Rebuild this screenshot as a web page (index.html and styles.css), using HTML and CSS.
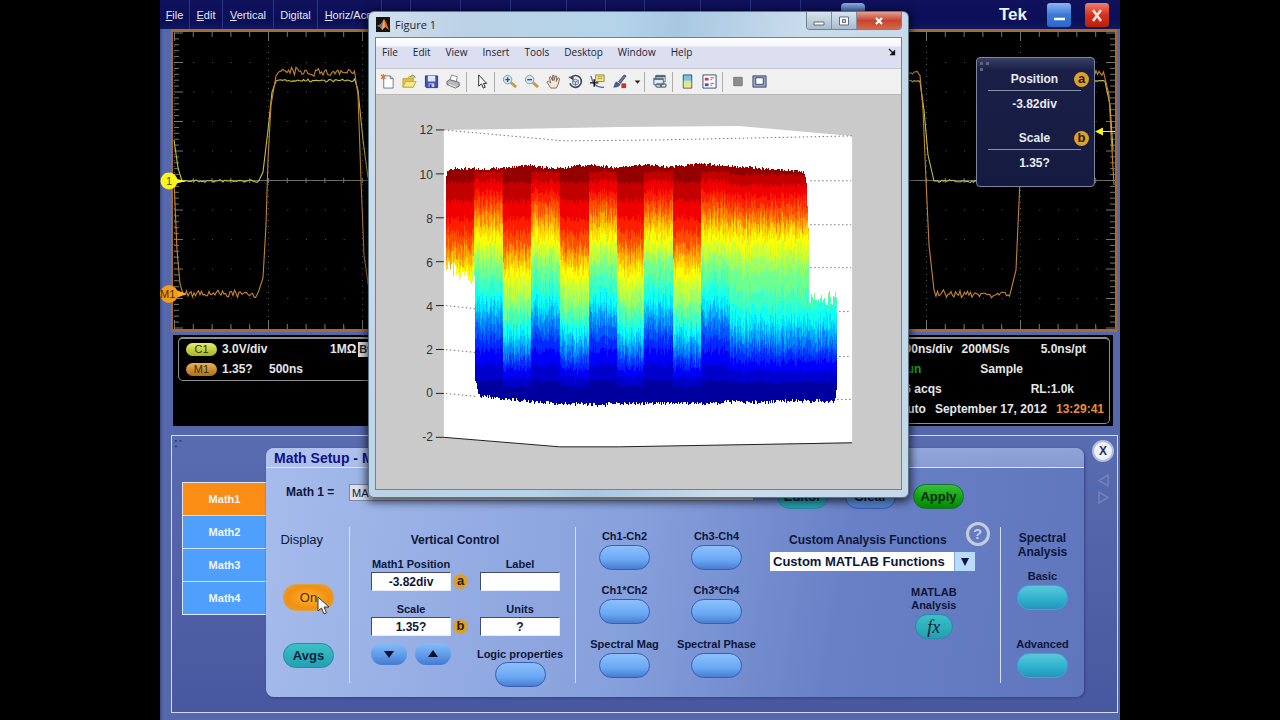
FILE: index.html
```html
<!DOCTYPE html>
<html lang="en">
<head>
<meta charset="utf-8">
<title>Oscilloscope - Math Setup</title>
<link rel="stylesheet" href="styles.css">
</head>
<body>
<main class="app">
  <header class="topbar">
    <nav class="menus" aria-label="Scope menu">
      <button class="menu"><u>F</u>ile</button>
      <button class="menu"><u>E</u>dit</button>
      <button class="menu menu-wide"><u>V</u>ertical</button>
      <button class="menu menu-mid">Di<u>g</u>ital</button>
      <button class="menu menu-last"><u>H</u>oriz/Acq</button>
      <span class="slot s29"></span><span class="slot s50"></span><span class="slot s50"></span><span class="slot s55"></span><span class="slot s40"></span><span class="slot s40"></span><span class="slot s55"></span><span class="slot s50"></span><span class="slot s50"></span>
    </nav>
    <span class="nub"></span>
    <strong class="brand">Tek</strong>
    <button class="sys sys-min" aria-label="Minimize"><svg viewBox="0 0 24 24"><path d="M7 16h11" stroke="#fff" stroke-width="2.500"/></svg></button>
    <button class="sys sys-close" aria-label="Close"><svg viewBox="0 0 24 24"><path d="M8 7l8 11M16 7l-8 11" stroke="#ffe4d8" stroke-width="2.600"/></svg></button>
  </header>

  <section class="scope">
    <svg class="trace" viewBox="173 32 942 297" id="trace">
      <g id="grid"></g>
      <path id="ch1" fill="none" stroke="#c4c23c" stroke-width="1.1"/>
      <path id="math" fill="none" stroke="#c58430" stroke-width="1.1"/>
      <path d="M174 178.500L187 181L174 184z" fill="#ff2"/>
      <circle cx="169" cy="181" r="8.500" fill="#fbf51c"/>
      <text x="166" y="185" font-size="11" fill="#554e00">1</text>
      <path d="M176 290L187 294L176 298z" fill="#ffae20"/>
      <circle cx="169" cy="294" r="9" fill="#f79a17"/>
      <text x="160" y="298" font-size="11" fill="#4d2c00">M1</text>
      <path d="M1095 131.500L1103 127.500V135.500zM1103 131h12v1h-12z" fill="#f5f02a"/>
    </svg>
    <aside class="knobs">
      <svg class="grip" viewBox="0 0 12 12"><path d="M1 1h3v3h-3zM7 1h3v3h-3zM1 7h3v3h-3z" fill="#5d6480"/></svg>
      <div class="knob"><span>Position</span><b class="badge">a</b></div>
      <div class="knob-value">-3.82div</div>
      <div class="knob"><span>Scale</span><b class="badge">b</b></div>
      <div class="knob-value">1.35?</div>
    </aside>
  </section>

  <section class="readout">
    <div class="box channels">
      <div class="line"><span class="pill pill-c1">C1</span><span class="v1">3.0V/div</span><span class="v2">1MΩ</span><span class="bw">B<small>W</small></span></div>
      <div class="line"><span class="pill pill-m1">M1</span><span class="v1">1.35?</span><span>500ns</span></div>
    </div>
    <div class="box timebase">
      <div class="line l1"><span>500ns/div</span><span>200MS/s</span><span class="far">5.0ns/pt</span></div>
      <div class="line l2"><span class="run">Run</span><span>Sample</span></div>
      <div class="line l3"><span>6 acqs</span><span>RL:1.0k</span></div>
      <div class="line l4"><span>Auto</span><span>September 17, 2012</span><span class="clock">13:29:41</span></div>
    </div>
  </section>

  <section class="dialog">
    <svg class="grip" viewBox="0 0 12 12"><path d="M1 1h2v2h-2zM6 1h2v2h-2zM1 7h2v2h-2z" fill="#2f3a72"/></svg>
    <nav class="tabs" aria-label="Math channel">
      <button class="tab tab-on">Math1</button>
      <button class="tab">Math2</button>
      <button class="tab">Math3</button>
      <button class="tab">Math4</button>
    </nav>
    <div class="panel">
      <h1 class="title">Math Setup - Math 1</h1>
      <div class="formula">
        <label for="expr">Math 1 =</label>
        <input id="expr" value="MATLAB">
        <button class="key teal">Editor</button>
        <button class="key blue">Clear</button>
        <button class="key green">Apply</button>
      </div>
      <div class="columns">
        <div class="col display">
          <h2>Display</h2>
          <button class="key orange">On</button>
          <button class="key teal">Avgs</button>
          <svg class="pointer" viewBox="0 0 13 19"><path d="M1 1V15L4.500 12L7 18L9.500 17L7 11H12z" fill="#fff" stroke="#333b55"/></svg>
        </div>
        <div class="col vertical">
          <h2>Vertical Control</h2>
          <div class="pairs">
            <div class="stack left">
              <div class="field"><label for="pos">Math1 Position</label><input id="pos" value="-3.82div"><b class="badge">a</b></div>
              <div class="field"><label for="scale">Scale</label><input id="scale" value="1.35?"><b class="badge">b</b></div>
              <div class="steps">
                <button class="step" aria-label="Down"><svg viewBox="0 0 10 8"><path d="M0 1h10L5 8z" fill="#0a1030"/></svg></button>
                <button class="step" aria-label="Up"><svg viewBox="0 0 10 8"><path d="M0 7h10L5 0z" fill="#0a1030"/></svg></button>
              </div>
            </div>
            <div class="stack">
              <div class="field"><label for="lab">Label</label><input id="lab" value=""></div>
              <div class="field"><label for="units">Units</label><input id="units" value="?"></div>
              <div class="op"><label for="logic">Logic properties</label><button id="logic" class="key blue"></button></div>
            </div>
          </div>
        </div>
        <div class="col ops">
          <div class="op"><label for="o1">Ch1-Ch2</label><button id="o1" class="key blue"></button></div>
          <div class="op"><label for="o2">Ch3-Ch4</label><button id="o2" class="key blue"></button></div>
          <div class="op"><label for="o3">Ch1*Ch2</label><button id="o3" class="key blue"></button></div>
          <div class="op"><label for="o4">Ch3*Ch4</label><button id="o4" class="key blue"></button></div>
          <div class="op"><label for="o5">Spectral Mag</label><button id="o5" class="key blue"></button></div>
          <div class="op"><label for="o6">Spectral Phase</label><button id="o6" class="key blue"></button></div>
        </div>
        <div class="col custom">
          <div class="custom-head"><label for="fn">Custom Analysis Functions</label><button class="help" aria-label="Help">?</button></div>
          <div class="select">
            <select id="fn"><option>Custom MATLAB Functions</option></select>
            <span class="arrow"><svg viewBox="0 0 8 8"><path d="M0 0h8L4 8z" fill="#101838"/></svg></span>
          </div>
          <div class="op matlab"><label for="fx">MATLAB<br>Analysis</label><button id="fx" class="key teal fx">fx</button></div>
        </div>
        <div class="col spectral">
          <h2>Spectral<br>Analysis</h2>
          <div class="op"><label for="basic">Basic</label><button id="basic" class="key teal plain"></button></div>
          <div class="op"><label for="adv">Advanced</label><button id="adv" class="key teal plain"></button></div>
        </div>
      </div>
    </div>
    <div class="side">
      <button class="dismiss" aria-label="Close panel">X</button>
      <svg class="nav" viewBox="0 0 12 32" fill="none" stroke="#7482bb" stroke-width="1.500"><path d="M11 2V13L2 7.500zM2 19V30L11 24.500z"/></svg>
    </div>
  </section>

  <section class="window" aria-label="Figure 1">
    <div class="win-title">
      <svg class="logo" viewBox="0 0 14 15"><path d="M0 0h14v15H0z" fill="#17110f"/><path d="M1 9L5 7L8 2L10 5L13 13L9 10L6 13L4 10z" fill="#e8632a"/><path d="M1 9L5 7L7 4L6 10L4 10z" fill="#4f7fa0"/><path d="M8 2L9 10L6 13L7 6z" fill="#f7b04a"/></svg>
      <span class="win-name">Figure 1</span>
      <div class="win-buttons">
        <button class="wb" aria-label="Minimize"><svg viewBox="0 0 12 12"><path d="M1 7h10v3H1z" fill="#fff" stroke="#5b6c7c"/></svg></button>
        <button class="wb" aria-label="Maximize"><svg viewBox="0 0 12 12"><path d="M1.500 2h9v8h-9z" fill="#fff" stroke="#5b6c7c"/><path d="M4.500 4.500h3v3h-3z" fill="#c8d4de" stroke="#5b6c7c"/></svg></button>
        <button class="wb wb-close" aria-label="Close"><svg viewBox="0 0 12 12"><path d="M3 3l6 6M9 3l-6 6" stroke="#fff" stroke-width="2.200"/></svg></button>
      </div>
    </div>
    <div class="win-body">
      <nav class="win-menu" aria-label="Figure menu">
        <button>File</button><button>Edit</button><button>View</button><button>Insert</button><button>Tools</button><button>Desktop</button><button>Window</button><button>Help</button>
        <svg class="dock" viewBox="0 0 8 8"><path d="M1 1L5 5M6.500 3V6.500H3z" stroke="#111" stroke-width="1.300" fill="#111"/></svg>
      </nav>
      <div class="tools">
        <button aria-label="New"><svg viewBox="0 0 16 16"><path d="M4 2h7l3 3v10H4z" fill="#fff" stroke="#69788c"/><path d="M11 2v3h3" fill="#c9d5e4" stroke="#69788c"/><path d="M1 1l5 4M6 1L1 5M3.500 0v6" stroke="#e0713a" stroke-width="1.300"/></svg></button>
        <button aria-label="Open"><svg viewBox="0 0 16 16"><path d="M1 5h5l1-2h5v3" fill="#f7de7a" stroke="#c9a436"/><path d="M1 14V5h11v9z" fill="#e7c249" stroke="#c9a436"/><path d="M1 14L4 8h11l-3 6z" fill="#fbe98e" stroke="#c9a436"/><path d="M9 3c2-3 4-2 5 1" fill="none" stroke="#5c7c49"/></svg></button>
        <button aria-label="Save"><svg viewBox="0 0 16 16"><path d="M1.500 2h13v12.500h-12l-1-1z" fill="#4652b8" stroke="#2b3483"/><path d="M4 2h8v6H4z" fill="#dfe5fa"/><path d="M5 10h6v4H5z" fill="#c7cbe4"/><path d="M6 11h2v3H6z" fill="#2b3483"/></svg></button>
        <button aria-label="Print"><svg viewBox="0 0 16 16"><path d="M4 7L6 1l6 2-1 5z" fill="#fff" stroke="#888"/><path d="M1 8l3-2 10 3v4l-4 2-9-4z" fill="#b6b9be" stroke="#63676e"/><path d="M3 11l8 3" stroke="#eee"/></svg></button>
        <span class="sep"></span>
        <button aria-label="Edit plot"><svg viewBox="0 0 16 16"><path d="M5 1v12l3-2.500L10 15l2-1-2-4h3.500z" fill="#fff" stroke="#222"/></svg></button>
        <span class="sep"></span>
        <button aria-label="Zoom in"><svg viewBox="0 0 16 16"><path d="M9.500 9L15 14" stroke="#c99a4c" stroke-width="3"/><circle cx="6" cy="6" r="4.500" fill="#d5e8f4" stroke="#8094a6"/><path d="M3.500 6h5M6 3.500v5" stroke="#265b72" stroke-width="1.500"/></svg></button>
        <button aria-label="Zoom out"><svg viewBox="0 0 16 16"><path d="M9.500 9L15 14" stroke="#c99a4c" stroke-width="3"/><circle cx="6" cy="6" r="4.500" fill="#d5e8f4" stroke="#8094a6"/><path d="M3.500 6h5" stroke="#265b72" stroke-width="1.500"/></svg></button>
        <button aria-label="Pan"><svg viewBox="0 0 16 16"><path d="M5 15L1 8.500l1.500-1L5 9.500L3.500 3.500l1.500-.5L7 7V1.500h1.500V7L10 2l1.500.5L11 8l2-4 1.500.8L13 11l-2 4z" fill="#f7e4d4" stroke="#6f5b50" stroke-width=".9"/></svg></button>
        <button aria-label="Rotate"><svg viewBox="0 0 16 16"><path d="M3 4a6.300 6.300 0 1 1-1 6" fill="none" stroke="#3d4760" stroke-width="1.700"/><path d="M0 3h6v4z" fill="#3d4760"/><path d="M5 7l3-1.500L11 7v3.500L8 12l-3-1.500zM5 7l3 1.500L11 7M8 8.500V12" fill="#d8def0" stroke="#4c5880" stroke-width=".8"/></svg></button>
        <button aria-label="Data cursor"><svg viewBox="0 0 16 16"><path d="M6 1h9v7H6z" fill="#f3e981" stroke="#8c8640"/><path d="M8 3h5M8 5h5" stroke="#a79f48"/><path d="M1 2c2 10 7 13 14 12" fill="none" stroke="#4c5db0" stroke-width="1.300"/><path d="M0 9.500h9M4.500 5.500v8" stroke="#111" stroke-width="1.500"/></svg></button>
        <button aria-label="Brush"><svg viewBox="0 0 16 16"><path d="M7 8L13 1l2 1-6 8z" fill="#6b7388" stroke="#4a5062"/><path d="M1 14c2-1 1-5 4-6l4 3c-1 3-5 4-8 3z" fill="#465d8c"/><path d="M10 10h5v5h-5z" fill="#d52b2b"/></svg></button>
        <button class="drop" aria-label="Brush colour"><svg viewBox="0 0 16 16"><path d="M5 7h6l-3 3.500z" fill="#222"/></svg></button>
        <span class="sep"></span>
        <button aria-label="Link"><svg viewBox="0 0 16 16"><path d="M4 1.500h10v7H4z" fill="#fff" stroke="#4b6279"/><path d="M4 2.500h10" stroke="#4b6279" stroke-width="2"/><path d="M2 4.500h10v7H2z" fill="#e2ebf2" stroke="#4b6279"/><path d="M2 5.500h10" stroke="#4b6279" stroke-width="1.500"/><rect x="4" y="10.500" width="6" height="3.500" rx="1.700" fill="none" stroke="#54697a" stroke-width="1.300"/><rect x="9" y="10.500" width="6" height="3.500" rx="1.700" fill="none" stroke="#54697a" stroke-width="1.300"/></svg></button>
        <span class="sep"></span>
        <button aria-label="Colorbar"><svg viewBox="0 0 16 16"><path d="M3.500 1h9v14h-9z" fill="#7cc3e8" stroke="#39466b"/><path d="M4 7h8v4H4z" fill="#c9e7a6"/><path d="M4 10h8v4.500H4z" fill="#f4e27c"/></svg></button>
        <button aria-label="Legend"><svg viewBox="0 0 16 16"><path d="M1 1h14v14H1z" fill="#fff" stroke="#39466b"/><path d="M3 4h4v3H3z" fill="#d8333c"/><path d="M3 10h4v3H3z" fill="#424fc0"/><path d="M9 4h4M9 6h2M9 10h4M9 12h2" stroke="#a55"/></svg></button>
        <span class="sep"></span>
        <button aria-label="Hide tools"><svg viewBox="0 0 16 16"><path d="M4 3.500h9v9H4z" fill="#8c8c8c" stroke="#777"/></svg></button>
        <button aria-label="Show tools"><svg viewBox="0 0 16 16"><path d="M1 2h14v12H1z" fill="#98a3cc" stroke="#39466b"/><path d="M4 4h8v7H4z" fill="#fff" stroke="#39466b"/></svg></button>
      </div>
      <svg class="plot" viewBox="376 95 526 395">
        <path d="M444 130L513 129L620 127L740 126L853 136V443L620 447.500H560L444 438z" fill="#fff"/>
        <g id="surface" shape-rendering="crispEdges"></g>
        <g fill="none" stroke="#777" stroke-dasharray="1.500 2.500"><path d="M444 130L565 141L660 140L853 136M446 306L475 309M446 350L476 353M446 394L476 397M811 181H852M811 225H852M811 268H852M840 312H852M840 357H852M838 400H852"/></g>
        <path d="M436 130h8M436 174h8M436 218h8M436 262h8M436 306h8M436 350h8M436 394h8M436 438h8L560 447.500H620L853 443.500" fill="none" stroke="#222"/>
        <g class="ticks" text-anchor="end"><text x="433" y="134">12</text><text x="433" y="179">10</text><text x="433" y="223">8</text><text x="433" y="267">6</text><text x="433" y="311">4</text><text x="433" y="355">2</text><text x="433" y="398">0</text><text x="433" y="442">-2</text></g>
      </svg>
    </div>
  </section>
</main>
<script src="plot.js"></script>
</body>
</html>
```
FILE: styles.css
```css
* { box-sizing: border-box; }
body { margin: 0; background: #000; font: bold 12px/14px "Liberation Sans", Arial, sans-serif; color: #0d1638; }
button, input, select { font: inherit; color: inherit; margin: 0; padding: 0; border: 0; }
button { cursor: pointer; }
h1, h2 { margin: 0; font: inherit; }
svg { display: block; }

.app { position: relative; width: 75%; min-width: 900px; min-height: 100vh; margin: 0 auto; display: flex; flex-direction: column; background: linear-gradient(90deg, #3c4a88 0, #5568ac 3px, #5568ac 100%); }

.topbar { display: flex; align-items: center; height: 29px; padding-right: 11px; background: linear-gradient(#10125c, #0a0f58 70%, #11185f); }
.menus { display: flex; align-self: stretch; flex: 1; overflow: hidden; }
.menu { width: 33px; flex: none; background: none; color: #e4e6f6; font-weight: normal; font-size: 11px; border-right: 1px solid #2c3584; text-align: center; }
.menu:first-child { width: 30px; }
.menu-mid { width: 44px; }
.menu-wide { width: 51px; }
.menu-last { width: 64px; padding-right: 2px; }
.slot { flex: none; border-right: 1px solid #2c3584; }
.s29 { width: 29px; } .s40 { width: 39px; } .s50 { width: 50px; } .s55 { width: 56px; }
.nub { width: 24px; height: 10px; margin: 3px 134px 0 0; align-self: flex-start; border-radius: 4px; background: linear-gradient(#8cace0, #4668b0); }
.brand { font-size: 17px; line-height: 24px; color: #eef0fa; margin-right: 20px; }
.sys { width: 24px; height: 24px; border-radius: 3px; }
.sys-min { background: linear-gradient(#8cb8f0, #3a78d8 50%, #2a68cc); margin-right: 14px; }
.sys-close { background: linear-gradient(#f08070, #d8301c 50%, #b82010); }

.scope { position: relative; margin: 0 3px 0 11px; border: solid #a46c34; border-width: 3px 2px; background: #000; }
.trace { width: 100%; overflow: visible; font-weight: normal; }
.knobs { position: absolute; top: 25px; right: 20px; width: 119px; height: 130px; padding: 14px 13px 0 11px; border: 1px solid #7f86a0; border-radius: 4px; background: linear-gradient(#3a3f66 0, #1a1f48 12px, #151b40); color: #e8eaf4; text-align: center; }
.knobs .grip { position: absolute; top: 3px; left: 2px; width: 12px; }
.knob { position: relative; height: 19px; border-bottom: 1px solid #8a90a8; }
.knob .badge { position: absolute; right: -8px; top: 0; }
.knob-value { line-height: 16px; padding: 5px 0 19px; }
.badge { width: 15px; height: 15px; border-radius: 8px; background: #dba02c; color: #2c1c00; text-align: center; line-height: 14px; font-size: 13px; }

.readout { display: flex; margin: 3px 7px 0 13px; height: 91px; background: #000; padding: 2px 3px 2px 5px; color: #e6e6e6; align-items: flex-start; }
.box { border: 1px solid #8f8f8f; border-top-width: 2px; border-radius: 5px; }
.channels { flex: 1; height: 44px; padding: 0 7px; }
.timebase { width: 260px; height: 87px; padding: 0 5px 0; }
.line { display: flex; align-items: center; height: 20px; line-height: 20px; }
.timebase .line { justify-content: flex-end; }
.pill { width: 31px; height: 13px; line-height: 13px; border-radius: 7px; text-align: center; font-size: 11px; margin-right: 5px; font-weight: normal; color: #333000; }
.pill-c1 { background: linear-gradient(#e4ec74, #a8b41c); }
.pill-m1 { background: linear-gradient(#e8b05c, #b07018); }
.v1 { width: 47px; }
.v2 { margin-left: 61px; }
.bw { margin-left: 2px; background: #ddd; color: #222; line-height: 14px; padding: 0 1px; font-size: 11px; }
.l1 { gap: 9px; padding-right: 18px; } .far { margin-left: 22px; }
.l2 { gap: 59px; padding-right: 81px; } .run { color: #18a028; }
.l3 { gap: 89px; padding-right: 30px; }
.l4 { gap: 9px; } .clock { color: #e89034; }

.dialog { position: relative; flex: 1; display: flex; align-items: flex-start; margin: 9px 2px 7px 11px; padding: 4px 0 14px 10px; border: 1px solid #d4daf0; background: linear-gradient(#5a6cb0, #4858a0); }
.dialog > .grip { position: absolute; left: 2px; top: 3px; width: 11px; }
.tabs { width: 84px; margin-top: 42px; border: solid #dfe6f8; border-width: 1px 0 1px 1px; }
.tab { display: block; width: 100%; height: 33px; background: #4ea0fc; color: #f2f5ff; border-top: 1px solid #cfe0fa; font-size: 11px; }
.tab-on { background: #fb8c14; height: 32px; border-top: 0; }
.panel { flex: 1; margin-top: 8px; border-radius: 8px; background: linear-gradient(100deg, #a6bcec, #86a0dc 45%, #6880c6 70%, #5f76bc); box-shadow: 1px 1px 3px #36427c; overflow: hidden; }
.title { height: 20px; padding: 1px 8px; font-size: 14px; line-height: 18px; color: #0e1188; border-bottom: 1px solid #dce4fa; background: linear-gradient(#bccaee88, #bccaee66); }
.formula { display: flex; align-items: flex-start; padding: 16px 120px 18px 20px; }
.formula label { width: 63px; line-height: 17px; }
.formula input { flex: 1; min-width: 0; margin-right: 23px; height: 17px; padding: 0 2px; border: 1px solid #7c86a8; background: #dde0ea; font-weight: normal; font-size: 11px; }
.formula .key + .key { margin-left: 17px; }

.columns { display: grid; grid-template-columns: 84fr 226fr 194fr 231fr 83fr; padding-bottom: 14px; }
.col { height: 156px; }
.display, .vertical { border-right: 1px solid #d3def8; }
.display { position: relative; display: flex; flex-direction: column; align-items: flex-end; padding: 6px 15px 0 0; }
.display h2 { font-weight: normal; font-size: 13px; padding-right: 11px; }
.display .orange { margin: 37px 0 32px; height: 27px; font-weight: normal; }
.pointer { position: absolute; left: 51px; top: 69px; width: 13px; }

.key { width: 51px; height: 25px; border-radius: 13px; font-size: 13px; }
.blue { border: 1px solid #3c5cb4; background: linear-gradient(#8cc0fc, #6aa8f4 60%, #4a7cd0); }
.teal { border: 1px solid #2c88a8; background: linear-gradient(#3cc0c8, #22a0b0); color: #08243c; }
.plain { border-color: #44a4d4; background: linear-gradient(#58c8dc, #2cb0cc 60%, #2494b8); }
.green { border: 1px solid #1c6c3c; background: linear-gradient(#38c038, #0ca40c 60%, #088408); color: #062410; }
.orange { border: 1px solid #e0a040; background: radial-gradient(ellipse, #ffb430, #f09010 60%, #e8a040); color: #4c2c00; }

.vertical { padding: 6px 14px 0 21px; }
.vertical h2 { text-align: center; padding-right: 22px; margin-bottom: 10px; }
.pairs { display: flex; gap: 10px; }
.stack { width: 80px; display: flex; flex-direction: column; gap: 11px; }
.left { width: 99px; }
.field { display: grid; grid-template-columns: 80px; row-gap: 1px; column-gap: 2px; align-items: center; }
.left .field { grid-template-columns: 80px 15px; }
.field label, .op label { font-size: 11px; text-align: center; white-space: nowrap; }
.field label { grid-column: 1; }
.field input { grid-column: 1; width: 80px; height: 19px; background: #fff; border: 1px solid #e8ecf8; border-top-color: #444c68; border-left-color: #444c68; text-align: center; }
.steps { display: flex; gap: 8px; margin-top: -4px; }
.step { width: 36px; height: 22px; border-radius: 11px; background: linear-gradient(#86bcf6, #5c98e8 60%, #4678d0); display: grid; place-items: center; }
.step svg { width: 10px; }
.op { display: flex; flex-direction: column; align-items: center; gap: 2px; white-space: nowrap; }
.stack .op { gap: 1px; }

.ops { display: grid; grid-template-columns: 92px 92px; justify-content: center; align-content: start; row-gap: 13px; padding: 2px 5px 0 0; }
.custom { display: flex; flex-direction: column; align-items: flex-start; border-right: 1px solid #d3def8; }
.custom-head { display: flex; gap: 19px; height: 25px; padding: 6px 0 0 19px; white-space: nowrap; }
.help { margin-top: -11px; width: 24px; height: 24px; border-radius: 12px; border: 3px solid #c4ccdc; background: none; color: #c4ccdc; font-size: 15px; line-height: 18px; }
.select { display: flex; position: relative; width: 205px; height: 19px; background: #fff; }
.select select { width: 100%; appearance: none; background: none; padding-left: 3px; border: 0; font-size: 13px; }
.arrow { position: absolute; right: 0; top: 0; width: 21px; height: 19px; display: grid; place-items: center; background: #b8dafc; border-left: 1px solid #84a8dc; pointer-events: none; }
.arrow svg { width: 8px; }
.matlab { margin: 15px 0 0 141px; text-align: center; line-height: 13px; }
.fx { width: 38px; font: italic 18px/20px "Liberation Serif", serif; }
.spectral { display: flex; flex-direction: column; align-items: center; padding-top: 4px; }
.spectral h2 { text-align: center; margin-bottom: 10px; }
.spectral .op + .op { margin-top: 27px; }

.side { width: 33px; display: flex; flex-direction: column; align-items: center; gap: 11px; padding-left: 5px; }
.dismiss { width: 22px; height: 22px; border-radius: 11px; border: 2px solid #b4bce0; background: #f0f2fa; color: #2c3058; }
.nav { width: 12px; }

.window { position: absolute; left: 208px; top: 11px; width: 541px; padding: 0 6px 7px; border: 1px solid #5c7488; border-radius: 6px; background: linear-gradient(100deg, #d4e2ee, #bcd2e6 15%, #b4d4ea 40%, #a8c8e2 50%, #cadcec 70%, #c4d8e8); box-shadow: 0 2px 9px 2px #000a; color: #1c2430; font: normal 11px/14px "Open Sans", sans-serif; }
.win-title { display: flex; height: 25px; align-items: center; gap: 5px; padding-left: 1px; }
.logo { width: 14px; }
.win-buttons { display: flex; margin-left: auto; align-self: flex-start; border: 1px solid #6f8292; border-top: 0; border-radius: 0 0 4px 4px; overflow: hidden; }
.wb { width: 25px; height: 17px; background: linear-gradient(#d8e4ee, #a8bccc); border-right: 1px solid #7c90a0; display: grid; place-items: center; }
.wb svg { width: 12px; }
.wb-close { width: 44px; border: 0; background: linear-gradient(#e4a090, #c84430 50%, #d46848); }
.win-body { border: 1px solid #6f8292; }
.win-menu { display: flex; align-items: center; height: 31px; padding: 0 5px 2px 6px; gap: 15px; font-size: 10px; background: linear-gradient(#fff 0, #f4f5fb 8px, #dcdff0 9px, #dcdff0); border-bottom: 1px solid #c4c6d0; }
.win-menu button { background: none; }
.dock { margin-left: auto; width: 8px; }
.tools { display: flex; align-items: center; height: 26px; background: #f1f0f0; border-bottom: 1px solid #b8b8b8; }
.tools button { width: 22px; height: 22px; background: none; display: grid; place-items: center; }
.tools svg { width: 15px; height: 15px; }
.tools .drop { width: 12px; }
.sep { width: 1px; height: 20px; margin: 0 3px 0 2px; background: #aaa; }
.plot { width: 100%; background: #cacaca; }
.ticks { font: normal 12px "Liberation Sans", Arial, sans-serif; fill: #333; }
```
FILE: plot.js
```js
const NS = "http://www.w3.org/2000/svg";
let seed = 7;
const rnd = () => (seed = (seed * 16807) % 2147483647) / 2147483647;
const jit = a => (rnd() - 0.5) * 2 * a;

function add(parent, tag, attrs) {
  const el = document.createElementNS(NS, tag);
  for (const k in attrs) el.setAttribute(k, attrs[k]);
  parent.appendChild(el);
}

function interp(points, x) {
  if (x <= points[0][0]) return points[0][1];
  for (let i = 1; i < points.length; i++) {
    const [x0, y0] = points[i - 1], [x1, y1] = points[i];
    if (x <= x1) return y0 + (y1 - y0) * (x - x0) / (x1 - x0);
  }
  return points[points.length - 1][1];
}

/* Graticule */
const grid = document.getElementById("grid");
let ticks = "", dots = "";
for (let i = 0; i <= 49; i++) {
  const x = 174.5 + i * 18.8, major = i % 5 === 0;
  const h = major ? 9 : 5;
  ticks += `M${x} 32v${h}M${x} 329v${-h}M${x} 178v5`;
  if (major) dots += `M${x} 40V322`;
  else for (let k = 0; k < 10; k++) if (k !== 4) dots += `M${x} ${62.5 + k * 29.5}h1`;
}
for (let y = 33; y < 329; y += 5.9) {
  const w = Math.round((y - 33) / 5.9) % 5 === 0 ? 9 : 5;
  ticks += `M174 ${y}h${w}M1115 ${y}h${-w}`;
}
add(grid, "path", { d: dots, stroke: "#555", "stroke-dasharray": "1 5" });
add(grid, "path", { d: ticks, stroke: "#77776e" });
add(grid, "path", { d: "M174 180.5H1115", stroke: "#6c6c6c" });

/* Waveforms: four-number entries are noisy runs, the rest are straight edges */
function wave(id, runs) {
  let d = "";
  for (const run of runs) {
    let pen = "M";
    for (const p of run) {
      if (p.length === 4) {
        for (let x = p[0]; x <= p[1]; x += 1.5) { d += `${pen}${x} ${p[2] + jit(p[3] * (0.3 + rnd() * 0.7))}`; pen = "L"; }
      } else { d += `${pen}${p[0]} ${p[1]}`; pen = "L"; }
    }
  }
  document.getElementById(id).setAttribute("d", d);
}
wave("ch1", [
  [[174, 140], [178, 168], [182, 181], [184, 259, 181, 1.6], [263, 172], [268, 130], [272, 92], [276, 81], [278, 355, 80.5, 1.6], [358, 90], [363, 140], [368, 178]],
  [[905, 921, 81, 1.6], [924, 110], [928, 155], [934, 181], [936, 980, 181, 1.6]],
  [[1090, 1106, 81, 1], [1110, 105], [1113, 150]]
]);
wave("math", [
  [[174, 180], [177, 250], [180, 284], [183, 294], [185, 259, 294, 4.5], [263, 278], [266, 225], [268, 160], [271, 105], [276, 76], [278, 355, 72, 5.5], [358, 95], [361, 180], [364, 255], [369, 290]],
  [[905, 920, 73, 5], [923, 110], [926, 180], [929, 245], [934, 290], [936, 1012, 294, 4.5], [1016, 270], [1018, 225], [1020, 180], [1022, 140]],
  [[1090, 1104, 74, 4], [1109, 95], [1112, 150], [1114, 185]]
]);

/* Surface: colour level -> y for each kind of stripe */
const low = [[0, 166], [.06, 174], [.125, 190], [.25, 215], [.34, 229], [.40, 244], [.5, 264], [.625, 300], [.75, 322], [.84, 343], [.9, 362], [.95, 380], [1, 394]];
const high = [[0, 166], [.06, 188], [.125, 216], [.22, 244], [.3, 258], [.38, 273], [.44, 290], [.5, 305], [.625, 331], [.75, 350], [.84, 364], [.9, 376], [.95, 386], [1, 396]];
const mid = [[0, 166], [.06, 178], [.125, 194], [.25, 219], [.34, 231], [.375, 239], [.42, 251], [.5, 272], [.57, 303], [.625, 319], [.75, 341], [.84, 356], [.9, 370], [.95, 382], [1, 395]];
const stripes = [[474, high], [503, low], [531, high], [560, low], [589, high], [617, low], [645, high], [674, low], [702, high], [731, low], [999, mid]];
const crest = [[446, 175], [449, 169], [500, 169], [518, 166], [530, 166], [555, 169], [575, 166], [592, 165], [615, 168], [645, 165], [675, 167], [698, 164], [730, 166], [770, 169], [804, 172], [807, 182], [809, 230], [810, 296], [837, 300]];
const base = [[475, 380], [478, 396], [500, 399], [530, 402], [560, 404], [605, 406], [610, 404], [720, 404], [724, 402], [760, 403], [790, 401], [835, 402], [837, 392]];

function jet(t) {
  const c = o => Math.round(255 * Math.max(0, Math.min(1, 1.5 - Math.abs(4 * t - o))));
  return `rgb(${c(3)},${c(2)},${c(1)})`;
}
const LEVELS = 22;
const paths = Array.from({ length: LEVELS }, () => "");
for (let x = 446; x < 838; x++) {
  const map = stripes.find(s => x < s[0])[1];
  const shared = jit(6);
  const t = interp(crest, x) + jit(x > 809 ? 8 : 1.5);
  const b = x < 475 ? 268 + (x - 446) * .4 + jit(8) : interp(base, x) + jit(2);
  for (let k = 0; k < LEVELS; k++) {
    const f = k / LEVELS;
    const sway = Math.min(1, f * 4, (1 - f) * 4);
    let y = k === 0 ? t : interp(map, f) + (shared + jit(5)) * sway;
    y = Math.max(t, y);
    if (y < b) paths[k] += `M${x} ${y.toFixed(1)}h1V${b.toFixed(1)}h-1z`;
  }
}
const surface = document.getElementById("surface");
paths.forEach((d, k) => add(surface, "path", { d, fill: jet(0.98 - 0.95 * k / (LEVELS - 1)) }));
```
